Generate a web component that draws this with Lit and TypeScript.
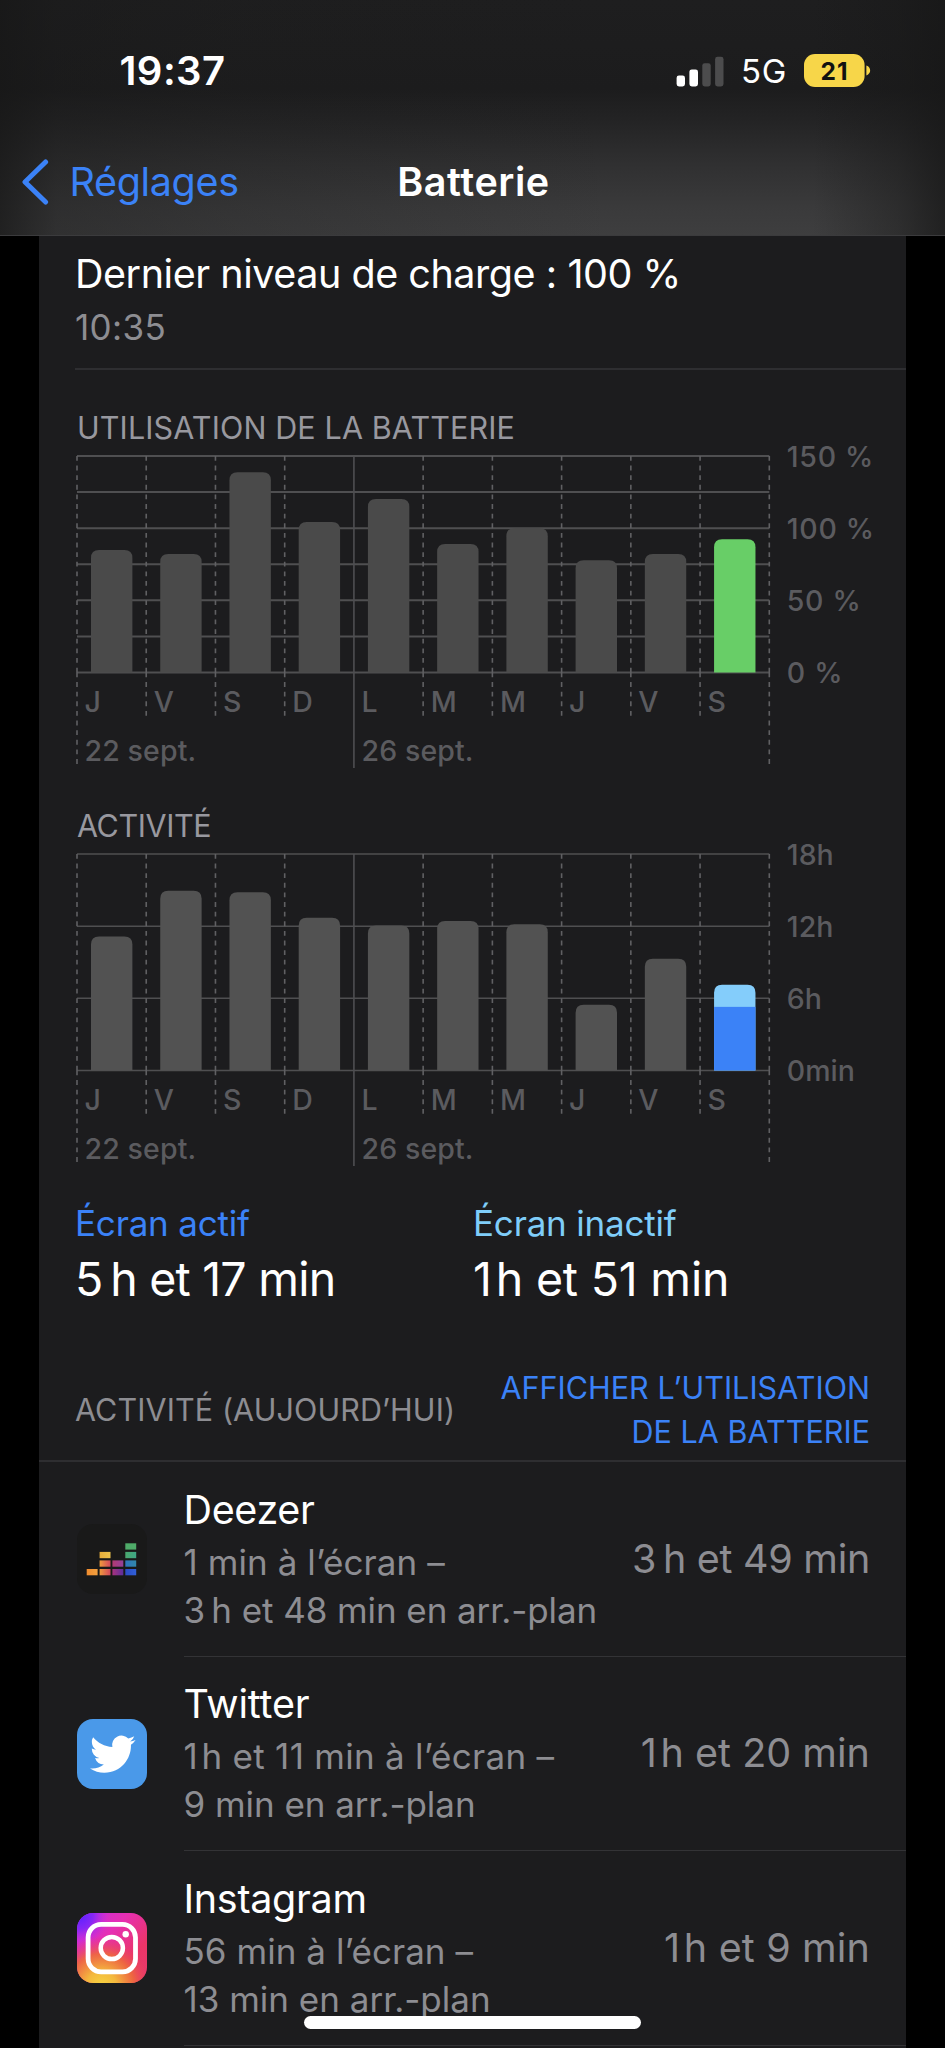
import { LitElement, html, svg, css } from "lit";
import { customElement, property } from "lit/decorators.js";
import { styleMap } from "lit/directives/style-map.js";

interface Chart {
  days: string[];
  bars: number[];
  max: number;
  rows: number;
  ticks: string[];
  tone: string;
  lineWidth: number;
}

const DAYS = ["J", "V", "S", "D", "L", "M", "M", "J", "V", "S"];

const USAGE: Chart = {
  days: DAYS,
  bars: [84.9, 82.1, 138.8, 104.2, 120.2, 89, 100, 77.8, 82.1, 92.3],
  max: 150,
  rows: 6,
  ticks: ["150 %", "100 %", "50 %", "0 %"],
  tone: "#4a4a4a",
  lineWidth: 2,
};

const ACTIVITY: Chart = {
  days: DAYS,
  bars: [11.15, 14.95, 14.81, 12.7, 12.06, 12.43, 12.15, 5.47, 9.29, 7.13],
  max: 18,
  rows: 3,
  ticks: ["18h", "12h", "6h", "0min"],
  tone: "#525252",
  lineWidth: 1.5,
};

const ACTIVE_HOURS = 5.29;

@customElement("battery-chart")
class BatteryChart extends LitElement {
  @property({ attribute: false }) chart!: Chart;
  @property({ type: Boolean }) split = false;

  static styles = css`
    :host { display: block; }
    svg { display: block; width: 867px; height: 322px; overflow: visible; }
    text {
      font-family: Inter, "Liberation Sans", sans-serif;
      font-weight: 500;
      font-size: 28.5px;
      fill: #5b5b5f;
    }
  `;

  render() {
    const { days, bars, max, rows, ticks, tone, lineWidth } = this.chart;
    const left = 38, top = 8, step = 69.23, height = 216.5;
    const right = left + step * days.length;
    const base = top + height;

    const bar = (v: number, i: number) => {
      const x = left + 14 + i * step;
      const h = (v / max) * height;
      const y = base - h;
      const last = i === bars.length - 1;
      const shape = `M${x} ${base}V${y + 8}q0-8 8-8h25.4q8 0 8 8V${base}Z`;
      if (!last) return svg`<path d=${shape} fill=${tone} />`;
      if (!this.split) return svg`<path d=${shape} fill="#68ce67" />`;
      const cut = (ACTIVE_HOURS / max) * height;
      return svg`<path d=${shape} fill="#84cdfb" />
        <rect x=${x} y=${base - cut} width="41.4" height=${cut} fill="#3b82f7" />`;
    };

    // Dashes restart at the baseline so the label separators stay in phase.
    const divider = (i: number) => {
      const x = left + i * step;
      if (i === 4) {
        return svg`<line x1=${x} x2=${x} y1=${top} y2="320" stroke="#4f4f52" stroke-width="1.6" />`;
      }
      const end = i === 0 || i === days.length ? 317 : 268;
      return svg`<path d=${`M${x} ${top}V${base}M${x} ${base}V${end}`} fill="none"
        stroke="#606063" stroke-width="1.6" stroke-dasharray="4.8 4.82" />`;
    };

    return html`<svg viewBox="0 0 867 322">
      ${Array.from({ length: rows + 1 }, (_, i) => {
        const y = top + (i * height) / rows;
        return svg`<line x1=${left} x2=${right} y1=${y} y2=${y} stroke="#4f4f51" stroke-width=${lineWidth} />`;
      })}
      ${Array.from({ length: days.length + 1 }, (_, i) => divider(i))}
      ${bars.map(bar)}
      ${days.map((d, i) => svg`<text x=${left + 7.5 + i * step} y="264">${d}</text>`)}
      <text x="45.5" y="312.8" letter-spacing="0.12">22 sept.</text>
      <text x="322.5" y="312.8" letter-spacing="0.12">26 sept.</text>
      ${ticks.map((t, i) => svg`<text x="747.8" y=${top + 10.8 + (i * height) / 3} letter-spacing=${t.includes("%") ? 0.7 : 0}>${t}</text>`)}
    </svg>`;
  }
}

const deezerCells: [number, number, string][] = [
  [0, 3, "url(#dzA)"],
  [1, 1, "url(#dzB)"], [1, 2, "url(#dzC)"], [1, 3, "url(#dzC)"],
  [2, 2, "url(#dzD)"], [2, 3, "url(#dzE)"],
  [3, 0, "#4fab69"], [3, 1, "url(#dzF)"], [3, 2, "url(#dzG)"], [3, 3, "url(#dzH)"],
];
const deezerX = [9.7, 22.6, 35.4, 48.3];
const deezerY = [19.3, 27.9, 36.4, 45];

const ramp = (id: string, a: string, b: string) => svg`<linearGradient id=${id}>
  <stop offset="0" stop-color=${a} /><stop offset="1" stop-color=${b} /></linearGradient>`;

const deezerIcon = html`<svg class="app-icon" viewBox="0 0 70 70">
  <defs>
    ${ramp("dzA", "#f08c2e", "#f3a03f")}
    ${ramp("dzB", "#e9ae3a", "#edc34c")}
    ${ramp("dzC", "#ef9a3c", "#d2475e")}
    ${ramp("dzD", "#b23a72", "#93409a")}
    ${ramp("dzE", "#a8327e", "#5c2f9c")}
    ${ramp("dzF", "#4aa86e", "#3fa686")}
    ${ramp("dzG", "#2f74c0", "#3187a8")}
    ${ramp("dzH", "#2b4bc4", "#3060d8")}
  </defs>
  <rect width="70" height="70" rx="16" fill="#191919" />
  ${deezerCells.map(([c, r, f]) => svg`<rect x=${deezerX[c]} y=${deezerY[r]} width="10.9" height="6.3" fill=${f} />`)}
</svg>`;

const twitterIcon = html`<svg class="app-icon" viewBox="0 0 70 70">
  <rect width="70" height="70" rx="16" fill="#4a99e9" />
  <path transform="translate(13 12.3) scale(1.9)" fill="#fff" d="M23.953 4.57a10 10 0 01-2.825.775 4.958 4.958 0 002.163-2.723c-.951.555-2.005.959-3.127 1.184a4.92 4.92 0 00-8.384 4.482C7.69 8.095 4.067 6.13 1.64 3.162a4.822 4.822 0 00-.666 2.475c0 1.71.87 3.213 2.188 4.096a4.904 4.904 0 01-2.228-.616v.06a4.923 4.923 0 003.946 4.827 4.996 4.996 0 01-2.212.085 4.936 4.936 0 004.604 3.417 9.867 9.867 0 01-6.102 2.105c-.39 0-.779-.023-1.17-.067a13.995 13.995 0 007.557 2.209c9.053 0 13.998-7.496 13.998-13.985 0-.21 0-.42-.015-.63A9.935 9.935 0 0024 4.59z" />
</svg>`;

const instagramIcon = html`<svg class="app-icon" viewBox="0 0 70 70">
  <defs>
    <linearGradient id="igBase" x1="0" y1="0" x2="1" y2="0.9">
      <stop offset="0" stop-color="#c22ee8" />
      <stop offset="0.4" stop-color="#e62fb4" />
      <stop offset="0.75" stop-color="#ea3568" />
      <stop offset="1" stop-color="#e93a6a" />
    </linearGradient>
    <radialGradient id="igViolet" cx="0.04" cy="0.04" r="0.42">
      <stop offset="0" stop-color="#5a20ff" />
      <stop offset="0.45" stop-color="#7a26fb" stop-opacity="0.85" />
      <stop offset="1" stop-color="#c22ee8" stop-opacity="0" />
    </radialGradient>
    <radialGradient id="igWarm" cx="0.35" cy="1.05" r="0.72">
      <stop offset="0" stop-color="#f7d540" />
      <stop offset="0.3" stop-color="#f4b83e" />
      <stop offset="0.65" stop-color="#ee6a3c" stop-opacity="0.9" />
      <stop offset="1" stop-color="#ea3568" stop-opacity="0" />
    </radialGradient>
  </defs>
  <rect width="70" height="70" rx="16" fill="url(#igBase)" />
  <rect width="70" height="70" rx="16" fill="url(#igViolet)" />
  <rect width="70" height="70" rx="16" fill="url(#igWarm)" />
  <rect x="11.1" y="11.4" width="47.4" height="47.4" rx="13" fill="none" stroke="#fff" stroke-width="4.8" />
  <circle cx="34.8" cy="35" r="11.1" fill="none" stroke="#fff" stroke-width="4.5" />
  <circle cx="48.7" cy="21.2" r="3.2" fill="#fff" />
</svg>`;

const APPS = [
  { icon: deezerIcon, name: "Deezer", ls: -0.35, lines: [["1 min à l’écran –", 0.08], ["3\u2009h et 48 min en arr.-plan", -0.08]], total: "3\u2009h et 49 min", tls: -0.28 },
  { icon: twitterIcon, name: "Twitter", ls: -0.2, lines: [["1\u200ah et 11 min à l’écran –", 0.28], ["9 min en arr.-plan", -0.05]], total: "1\u200ah et 20 min", tls: 0.04 },
  { icon: instagramIcon, name: "Instagram", ls: -0.3, lines: [["56 min à l’écran –", 0.05], ["13 min en arr.-plan", 0]], total: "1\u200ah et 9 min", tls: 0.15 },
] as const;

const spacing = (v: number) => styleMap({ letterSpacing: `${v}px` });

@customElement("app-root")
class AppRoot extends LitElement {
  static styles = css`
    :host {
      display: block;
      position: relative;
      width: 945px;
      height: 2048px;
      overflow: hidden;
      background: #000;
      color: #fff;
      font-family: Inter, "Liberation Sans", sans-serif;
      white-space: nowrap;
    }
    .header {
      box-sizing: border-box;
      height: 236px;
      border-bottom: 1px solid #3b3b3d;
      background:
        linear-gradient(90deg, rgba(23,23,23,.75) 0, rgba(24,24,24,.35) 6%, rgba(28,28,28,.22) 25%, rgba(28,28,28,.08) 50%, transparent 65%, transparent 86%, rgba(24,24,24,.4) 95%, rgba(23,23,23,.75) 100%),
        linear-gradient(180deg, #1e1e1f 0, #1c1c1d 38%, #242425 52%, #303031 70%, #3a3a3b 88%, #3e3e3f 100%);
    }
    .status { height: 142px; display: flex; align-items: center; padding: 0 75px 0 119.5px; }
    .time { flex: 1; font-weight: 600; font-size: 40px; line-height: 50px; letter-spacing: .45px; margin-top: -1px; }
    .signal { width: 48px; height: 31px; display: block; margin-right: 17px; }
    .network { font-size: 33px; line-height: 40px; letter-spacing: .6px; margin-right: 17px; }
    .battery { width: 66px; height: 33px; display: block; overflow: visible; margin-top: -1px; }
    .battery text { font-weight: 700; font-size: 24.5px; letter-spacing: 1px; }
    .nav { height: 80px; display: grid; grid-template-columns: 1fr auto 1fr; align-items: center; font-size: 39.5px; line-height: 50px; }
    .back { display: flex; align-items: center; gap: 20.5px; padding-left: 21px; color: #3b82f7; letter-spacing: -.35px; }
    .chevron { width: 28px; height: 46px; display: block; }
    .title { font-weight: 600; letter-spacing: .54px; padding-left: 2px; }
    .card { margin: 0 39px; width: 867px; background: #1c1c1e; height: 1812px; overflow: hidden; }
    .charge { margin-left: 36px; padding-top: 12px; height: 120px; border-bottom: 2px solid #2e2e31; }
    .charge-title { font-size: 39.5px; line-height: 53px; letter-spacing: -.46px; }
    .charge-time { font-size: 35px; line-height: 53px; letter-spacing: .35px; color: #8d8d92; }
    .heading { font-size: 30.5px; line-height: 40px; color: #98989f; padding-left: 38px; letter-spacing: .12px; }
    .heading.usage { margin-top: 38px; }
    .heading.activity { margin-top: 36px; letter-spacing: -.4px; }
    .stats { display: grid; grid-template-columns: 398px 1fr; padding: 33px 0 0 36px; }
    .stat-label { font-size: 35px; line-height: 44px; letter-spacing: -.19px; color: #3b82f7; }
    .stat-label.idle { color: #7fcdf9; }
    .stat-value { font-size: 46.5px; line-height: 58px; margin-top: 5px; letter-spacing: -.78px; }
    .stat-value.idle { letter-spacing: -.2px; }
    .section { display: flex; justify-content: space-between; align-items: center; margin-top: 58px; height: 94px; padding: 0 36px 7px 36px; box-sizing: border-box; font-size: 30.5px; color: #8d8d92; }
    .section-title { letter-spacing: .1px; }
    .toggle { color: #3b82f7; text-align: right; line-height: 43.5px; letter-spacing: .03px; }
    .apps { border-top: 2px solid #2e2e31; }
    .app { display: flex; align-items: center; height: 194.6px; padding-left: 38px; }
    .app-icon { width: 70px; height: 70px; flex: none; display: block; }
    .app-body { flex: 1; display: flex; align-items: center; justify-content: space-between; height: 100%; margin-left: 36.5px; padding-right: 36px; box-sizing: border-box; border-bottom: 1.5px solid #333336; }
    .app-name { font-size: 39.5px; line-height: 52px; margin-bottom: 2px; }
    .app-line { font-size: 35px; line-height: 48px; color: #8d8d92; }
    .app-total { font-size: 39.5px; color: #8d8d92; }
    .home { position: absolute; left: 304px; top: 2016px; width: 337px; height: 13px; border-radius: 7px; background: #fff; }
  `;

  render() {
    return html`
      <div class="header">
        <div class="status">
          <div class="time">19:37</div>
          <svg class="signal" viewBox="0 0 48 31">
            <rect x="0.6" y="19.5" width="8.4" height="11" rx="2.4" fill="#fff" />
            <rect x="13.4" y="13.4" width="8.6" height="17.1" rx="2.4" fill="#fff" />
            <rect x="26.3" y="7.2" width="8.4" height="23.3" rx="2.4" fill="#4c4c4d" />
            <rect x="39.1" y="0.8" width="8.4" height="29.7" rx="2.4" fill="#4c4c4d" />
          </svg>
          <div class="network">5G</div>
          <svg class="battery" viewBox="0 0 66 33">
            <rect width="60.6" height="33" rx="11" fill="#f7d649" />
            <path d="M62.4 11.6c5 1.6 5 8.2 0 9.8Z" fill="#f7d649" />
            <text x="30.6" y="25.6" text-anchor="middle" fill="#111">21</text>
          </svg>
        </div>
        <div class="nav">
          <div class="back">
            <svg class="chevron" viewBox="0 0 28 46">
              <path d="M24.6 3 4 23l20.6 20" fill="none" stroke="#3b82f7" stroke-width="5" stroke-linecap="round" stroke-linejoin="round" />
            </svg>
            <span>Réglages</span>
          </div>
          <div class="title">Batterie</div>
        </div>
      </div>
      <div class="card">
        <div class="charge">
          <div class="charge-title">Dernier niveau de charge : 100 %</div>
          <div class="charge-time">10:35</div>
        </div>
        <div class="heading usage">UTILISATION DE LA BATTERIE</div>
        <battery-chart .chart=${USAGE}></battery-chart>
        <div class="heading activity">ACTIVITÉ</div>
        <battery-chart .chart=${ACTIVITY} split></battery-chart>
        <div class="stats">
          <div>
            <div class="stat-label">Écran actif</div>
            <div class="stat-value">5\u2009h et 17 min</div>
          </div>
          <div>
            <div class="stat-label idle">Écran inactif</div>
            <div class="stat-value idle">1\u200ah et 51 min</div>
          </div>
        </div>
        <div class="section">
          <div class="section-title">ACTIVITÉ (AUJOURD’HUI)</div>
          <div class="toggle">AFFICHER L’UTILISATION<br />DE LA BATTERIE</div>
        </div>
        <div class="apps">
          ${APPS.map((a) => html`
            <div class="app">
              ${a.icon}
              <div class="app-body">
                <div>
                  <div class="app-name" style=${spacing(a.ls)}>${a.name}</div>
                  ${a.lines.map(([t, s]) => html`<div class="app-line" style=${spacing(s)}>${t}</div>`)}
                </div>
                <div class="app-total" style=${spacing(a.tls)}>${a.total}</div>
              </div>
            </div>`)}
        </div>
      </div>
      <div class="home"></div>
    `;
  }
}
